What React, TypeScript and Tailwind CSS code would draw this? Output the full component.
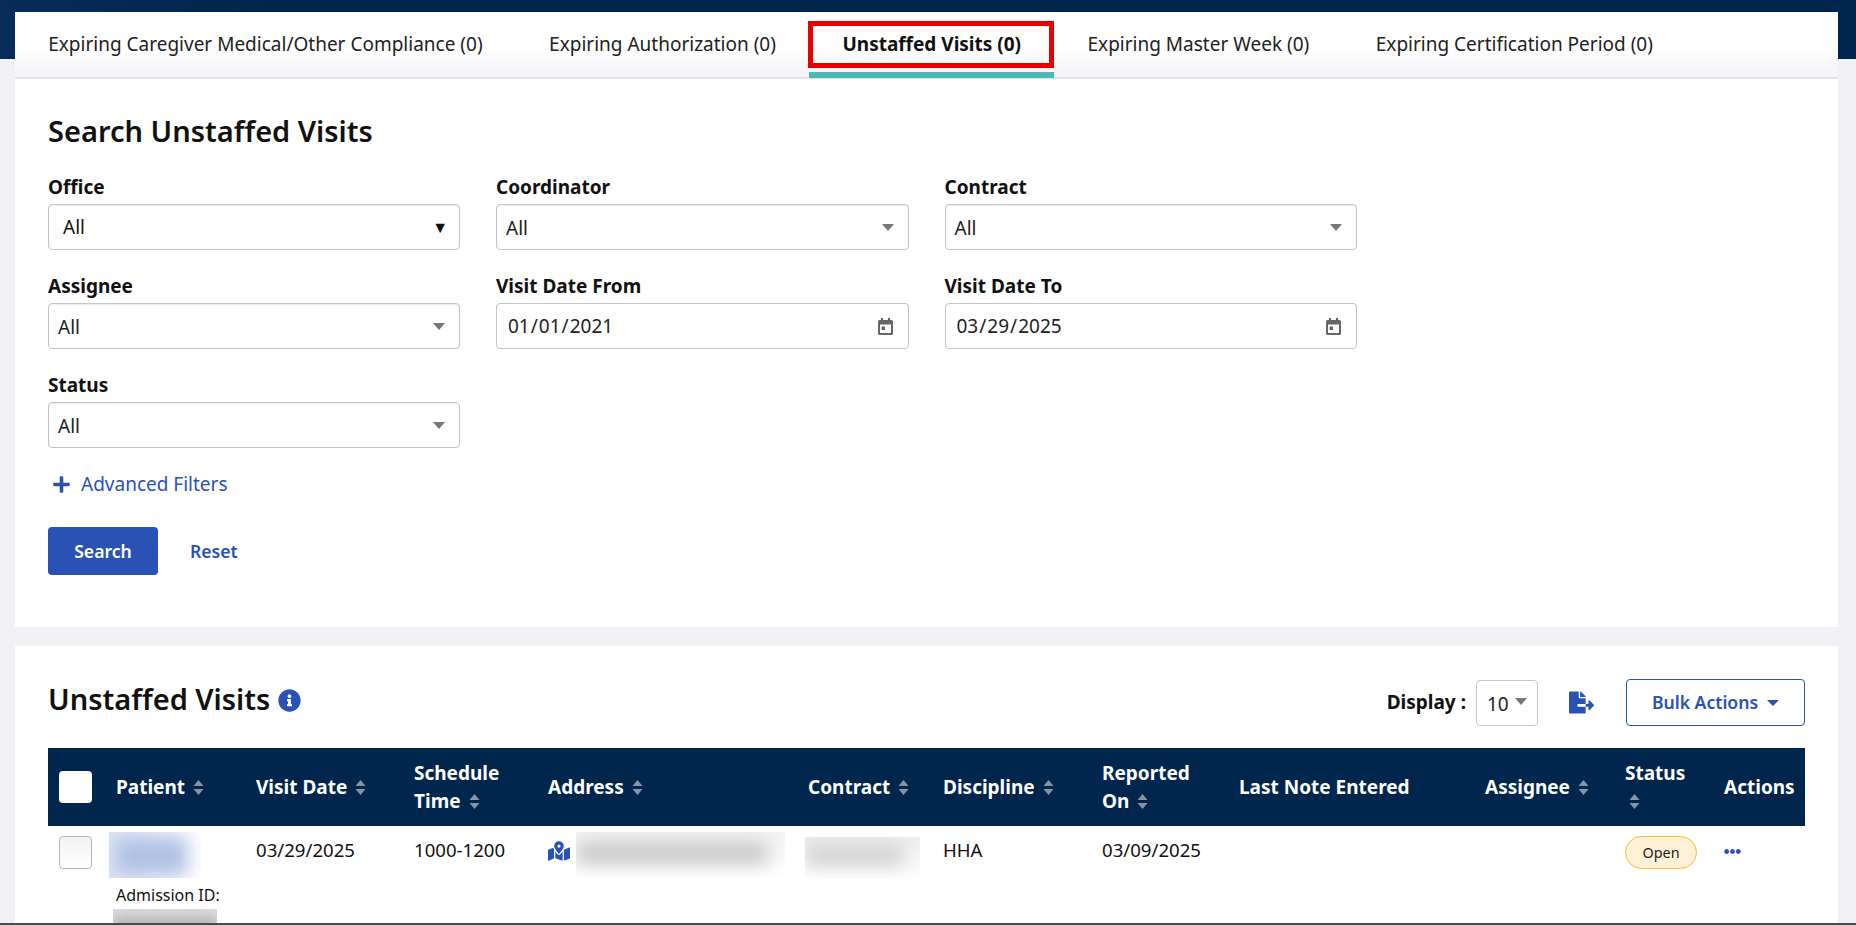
import { FaFileExport, FaInfoCircle, FaMapMarkedAlt, FaEllipsisH, FaPlus } from "react-icons/fa";

const tabs = [
  { label: "Expiring Caregiver Medical/Other Compliance (0)" },
  { label: "Expiring Authorization (0)" },
  { label: "Unstaffed Visits (0)", active: true },
  { label: "Expiring Master Week (0)" },
  { label: "Expiring Certification Period (0)" },
];

function Caret() {
  return <span className="h-0 w-0 border-x-[6px] border-t-[7px] border-x-transparent border-t-[#777]" />;
}

function SortIcon({ className }: { className?: string }) {
  return (
    <svg viewBox="0 0 11 15" className={`h-[15px] w-[11px] shrink-0 fill-[#8794a5] ${className ?? ""}`}>
      <path d="M5.5 0 10.5 6H.5zM5.5 15 .5 9h10z" />
    </svg>
  );
}

function CalendarIcon() {
  return (
    <svg viewBox="0 0 15 17" className="h-[17px] w-[15px] shrink-0 fill-[#666]">
      <path
        fillRule="evenodd"
        d="M3 0h2v2h5V0h2v2h1.5A1.5 1.5 0 0 1 15 3.5v12a1.5 1.5 0 0 1-1.5 1.5h-12A1.5 1.5 0 0 1 0 15.500v-12A1.500 1.500 0 0 1 1.500 2H3zM2 6.500V15h11V6.500zM3.500 8.500h3.500V12H3.500z"
      />
    </svg>
  );
}

function SelectField({ label, native }: { label: string; native?: boolean }) {
  return (
    <div>
      <div className="mb-[4px] text-[19px] leading-[25px] font-bold text-[#111]">{label}</div>
      <div className="flex h-[46px] items-center justify-between rounded-[4px] border border-[#c4c4c4] bg-white pr-[14px] pl-[9px] shadow-[inset_0_1px_2px_rgba(0,0,0,0.08)]">
        {native ? (
          <>
            <span className="pl-[5px] text-[19px] text-[#111]">All</span>
            <span className="mr-[-3px] text-[16px] text-[#111]">▼</span>
          </>
        ) : (
          <>
            <span className="pt-[3px] text-[19px] text-[#222]">All</span>
            <Caret />
          </>
        )}
      </div>
    </div>
  );
}

function DateField({ label, value }: { label: string; value: string }) {
  return (
    <div>
      <div className="mb-[4px] text-[19px] leading-[25px] font-bold text-[#111]">{label}</div>
      <div className="flex h-[46px] items-center rounded-[4px] border border-[#c4c4c4] bg-white pr-[15px] pl-[10px]">
        <input
          type="date"
          defaultValue={value}
          className="min-w-0 flex-1 text-[19px] text-[#222] outline-none [&::-webkit-calendar-picker-indicator]:hidden"
        />
        <CalendarIcon />
      </div>
    </div>
  );
}

function HeadCell({ lines, sort, center }: { lines: string[]; sort?: boolean; center?: boolean }) {
  return (
    <th className="p-0 pr-[10px] text-left align-middle text-[19px] leading-[28px] font-bold text-white">
      {lines.map((line, i) => (
        <div key={line} className="flex items-center whitespace-nowrap">
          {line}
          {sort && i === lines.length - 1 && !center && <SortIcon className="ml-[8px]" />}
        </div>
      ))}
      {center && (
        <div className="flex h-[28px] items-center pl-[4px]">
          <SortIcon />
        </div>
      )}
    </th>
  );
}

const colWidths = ["w-[68px]", "w-[140px]", "w-[158px]", "w-[134px]", "w-[260px]", "w-[135px]", "w-[159px]", "w-[137px]", "w-[246px]", "w-[140px]", "w-[99px]", "w-[81px]"];

export default function App() {
  return (
    <div className="relative h-[925px] w-[1856px] overflow-hidden bg-[#f0f0f5] font-['Noto_Sans','Open_Sans',sans-serif] text-[#111]">
      <div className="absolute inset-x-0 top-0 h-[59px] bg-gradient-to-r from-[#072c58] to-[#00264d] to-[15%]" />

      <div className="relative mx-[15px] w-[1823px]">
        <div className="pt-[12px]">
          <div className="flex h-[67px] border-b-2 border-[#e2e2e6] bg-gradient-to-b from-white from-50% to-[#f4f4f7]">
            {tabs.map((tab) => (
              <div key={tab.label} className="flex h-[65px] items-center px-[33.25px]">
                <span className={`whitespace-nowrap text-[19px] ${tab.active ? "font-bold text-[#111]" : "text-[#222]"}`}>
                  {tab.label}
                </span>
              </div>
            ))}
          </div>
        </div>

        <section className="bg-white px-[33px] pt-[34px] pb-[52px]">
          <h1 className="mb-[26px] text-[29px] leading-[36px] font-semibold text-[#111]">Search Unstaffed Visits</h1>
          <div className="grid w-[1308px] grid-cols-[412px_412.500px_412px] gap-x-[36px] gap-y-[24px]">
            <SelectField label="Office" native />
            <SelectField label="Coordinator" />
            <SelectField label="Contract" />
            <SelectField label="Assignee" />
            <DateField label="Visit Date From" value="2021-01-01" />
            <DateField label="Visit Date To" value="2025-03-29" />
            <SelectField label="Status" />
          </div>
          <div className="mt-[24px] flex items-center pl-[4px] text-[19px] leading-[25px] text-[#2a52b5]">
            <FaPlus className="mr-[10px] h-[19px] w-[19px]" />
            Advanced Filters
          </div>
          <div className="mt-[30px] flex items-center">
            <button className="h-[48px] w-[110px] rounded-[4px] bg-[#2a52b5] text-[17.6px] font-semibold text-white">Search</button>
            <span className="ml-[32px] text-[17.6px] font-semibold text-[#2a52b5]">Reset</span>
          </div>
        </section>

        <section className="mt-[19px] bg-white px-[33px] pt-[33px]">
          <div className="flex h-[47px] items-center justify-between">
            <div className="mt-[-7px] flex items-center">
              <h2 className="text-[29px] font-semibold text-[#111]">Unstaffed Visits</h2>
              <FaInfoCircle className="mt-[3px] ml-[8px] h-[23px] w-[23px] text-[#2a52b5]" />
            </div>
            <div className="flex items-center">
              <span className="text-[19px] font-bold text-[#111]">Display :</span>
              <div className="ml-[10px] flex h-[46px] w-[62px] items-start rounded-[4px] border border-[#c8c8c8] pt-[9px] pl-[10px]">
                <span className="text-[19px] text-[#222]">10</span>
                <span className="mt-[8px] ml-[6px] flex"><Caret /></span>
              </div>
              <FaFileExport className="mr-[32px] ml-[31px] h-[23px] w-[25px] text-[#2a52b5]" />
              <button className="flex h-[47px] w-[179px] items-center justify-center rounded-[4px] border border-[#2a52b5] text-[17.6px] font-semibold text-[#2a52b5]">
                Bulk Actions
                <span className="ml-[9px] h-0 w-0 border-x-[6px] border-t-[6px] border-x-transparent border-t-[#2a52b5]" />
              </button>
            </div>
          </div>

          <table className="mt-[22px] w-[1757px] table-fixed border-collapse">
            <colgroup>
              {colWidths.map((w) => <col key={w} className={w} />)}
            </colgroup>
            <thead>
              <tr className="h-[78px] bg-[#00264d]">
                <th className="p-0 pl-[11px] align-middle">
                  <div className="h-[32px] w-[33px] rounded-[4px] bg-white" />
                </th>
                <HeadCell lines={["Patient"]} sort />
                <HeadCell lines={["Visit Date"]} sort />
                <HeadCell lines={["Schedule", "Time"]} sort />
                <HeadCell lines={["Address"]} sort />
                <HeadCell lines={["Contract"]} sort />
                <HeadCell lines={["Discipline"]} sort />
                <HeadCell lines={["Reported", "On"]} sort />
                <HeadCell lines={["Last Note Entered"]} />
                <HeadCell lines={["Assignee"]} sort />
                <HeadCell lines={["Status"]} center />
                <HeadCell lines={["Actions"]} />
              </tr>
            </thead>
            <tbody>
              <tr className="align-top text-[18.6px] text-[#111]">
                <td className="p-0 pt-[10px] pl-[11px]">
                  <div className="h-[33px] w-[33px] rounded-[4px] border border-[#b5b5b5] bg-gradient-to-b from-[#f3f3f3] to-white" />
                </td>
                <td className="p-0 pt-[6px]">
                  <div className="ml-[-7px] h-[46px] w-[93px] overflow-hidden bg-gradient-to-r from-[#dfe5f3] to-white">
                    <div className="mt-[5px] ml-[6px] h-[38px] w-[72px] bg-[#b0c0e4] blur-[9px]" />
                  </div>
                  <div className="mt-[6px] text-[16px] leading-[22px]">Admission ID:</div>
                  <div className="mt-[3px] ml-[-3px] h-[20px] w-[104px] overflow-hidden bg-[#dcdcdc]">
                    <div className="mt-[8px] h-[20px] w-[104px] bg-[#b4b4b4] blur-[6px]" />
                  </div>
                </td>
                <td className="p-0 pt-[11px] leading-[26px]">03/29/2025</td>
                <td className="p-0 pt-[11px] leading-[26px]">1000-1200</td>
                <td className="p-0 pt-[6px]">
                  <div className="flex items-start">
                    <FaMapMarkedAlt className="mt-[9px] h-[20px] w-[22px] text-[#2a52b5]" />
                    <div className="ml-[6px] h-[46px] w-[209px] overflow-hidden bg-gradient-to-b from-[#f3f3f3] to-white">
                      <div className="mt-[10px] h-[22px] w-[192px] bg-[#c8c8c8] blur-[9px]" />
                    </div>
                  </div>
                </td>
                <td className="p-0 pt-[11px]">
                  <div className="ml-[-3px] h-[42px] w-[115px] overflow-hidden bg-gradient-to-b from-[#eeeeee] to-white">
                    <div className="mt-[7px] h-[22px] w-[98px] bg-[#d2d2d2] blur-[9px]" />
                  </div>
                </td>
                <td className="p-0 pt-[11px] leading-[26px]">HHA</td>
                <td className="p-0 pt-[11px] leading-[26px]">03/09/2025</td>
                <td className="p-0" />
                <td className="p-0" />
                <td className="p-0 pt-[10px]">
                  <span className="flex h-[33px] w-[72px] items-center justify-center rounded-full border border-[#fdb92e] bg-[#fff2d6] text-[14.4px] text-[#222]">Open</span>
                </td>
                <td className="p-0 pt-[17px]">
                  <FaEllipsisH className="h-[17px] w-[17px] text-[#2a52b5]" />
                </td>
                <td className="p-0" />
              </tr>
            </tbody>
          </table>
        </section>
      </div>

      {/* red annotation on the active tab, its underline and the window edge */}
      <div className="absolute top-[21px] left-[808px] h-[47px] w-[246px] border-[5px] border-[#e60000]" />
      <div className="absolute top-[72px] left-[809px] h-[6px] w-[245px] bg-[#4db8b4]" />
      <div className="absolute inset-x-0 bottom-0 h-[2px] bg-[#4a4a4a]" />
    </div>
  );
}
